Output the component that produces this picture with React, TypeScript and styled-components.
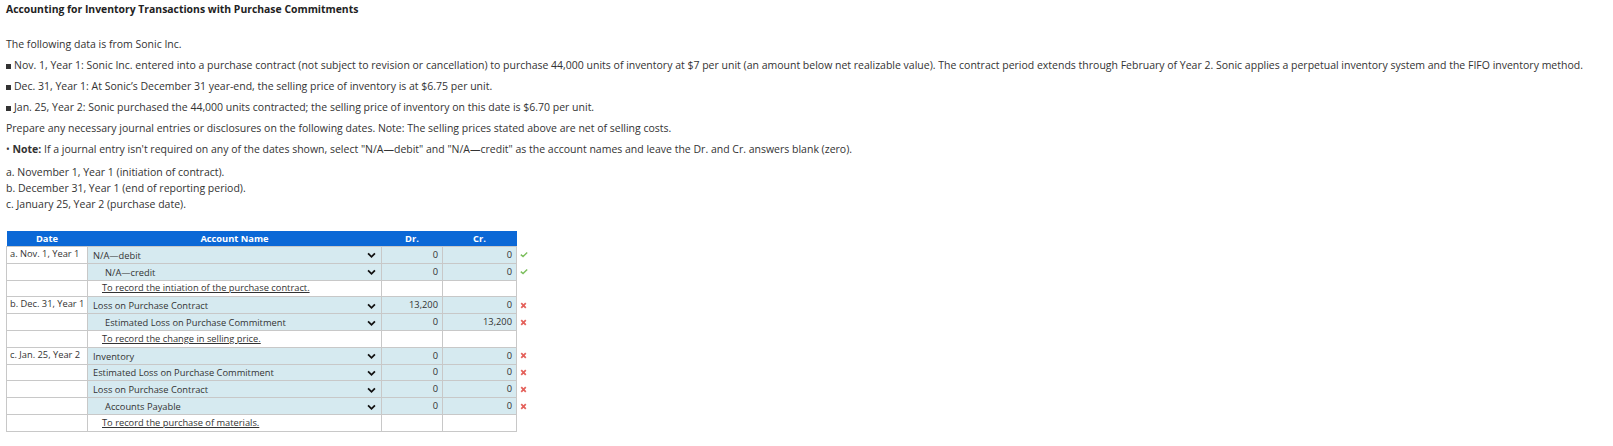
import styled, { createGlobalStyle } from 'styled-components'

const GlobalStyle = createGlobalStyle`
  body {
    margin: 0;
    background: #fff;
    font-family: "Open Sans", "Noto Sans", sans-serif;
    color: #333;
  }
`

type Status = 'ok' | 'bad' | undefined

interface Line {
  date?: string
  account: string
  indent?: boolean
  dr: string
  cr: string
  status: Status
}

interface Entry {
  lines: Line[]
  memo: string
}

const entries: Entry[] = [
  {
    lines: [
      { date: 'a. Nov. 1, Year 1', account: 'N/A\u2014debit', dr: '0', cr: '0', status: 'ok' },
      { account: 'N/A\u2014credit', indent: true, dr: '0', cr: '0', status: 'ok' },
    ],
    memo: 'To record the intiation of the purchase contract.',
  },
  {
    lines: [
      { date: 'b. Dec. 31, Year 1', account: 'Loss on Purchase Contract', dr: '13,200', cr: '0', status: 'bad' },
      { account: 'Estimated Loss on Purchase Commitment', indent: true, dr: '0', cr: '13,200', status: 'bad' },
    ],
    memo: 'To record the change in selling price.',
  },
  {
    lines: [
      { date: 'c. Jan. 25, Year 2', account: 'Inventory', dr: '0', cr: '0', status: 'bad' },
      { account: 'Estimated Loss on Purchase Commitment', dr: '0', cr: '0', status: 'bad' },
      { account: 'Loss on Purchase Contract', dr: '0', cr: '0', status: 'bad' },
      { account: 'Accounts Payable', indent: true, dr: '0', cr: '0', status: 'bad' },
    ],
    memo: 'To record the purchase of materials.',
  },
]

export default function App() {
  return (
    <Page>
      <GlobalStyle />
      <Title>Accounting for Inventory Transactions with Purchase Commitments</Title>
      <Para>The following data is from Sonic Inc.</Para>
      <Para>
        <Square />Nov. 1, Year 1: Sonic Inc. entered into a purchase contract (not subject to revision or
        cancellation) to purchase 44,000 units of inventory at $7 per unit (an amount below net realizable
        value). The contract period extends through February of Year 2. Sonic applies a perpetual inventory
        system and the FIFO inventory method.
      </Para>
      <Para>
        <Square />Dec. 31, Year 1: At Sonic’s December 31 year-end, the selling price of inventory is at $6.75 per unit.
      </Para>
      <Para>
        <Square />Jan. 25, Year 2: Sonic purchased the 44,000 units contracted; the selling price of inventory on
        this date is $6.70 per unit.
      </Para>
      <Para>
        Prepare any necessary journal entries or disclosures on the following dates. Note: The selling prices
        stated above are net of selling costs.
      </Para>
      <Para>
        <Dot>•</Dot> <b>Note:</b> If a journal entry isn't required on any of the dates shown, select
        "N/A—debit" and "N/A—credit" as the account names and leave the Dr. and Cr. answers blank (zero).
      </Para>
      <DateList>
        <div>a. November 1, Year 1 (initiation of contract).</div>
        <div>b. December 31, Year 1 (end of reporting period).</div>
        <div>c. January 25, Year 2 (purchase date).</div>
      </DateList>

      <Journal>
        <colgroup>
          <col style={{ width: 81 }} />
          <col style={{ width: 294 }} />
          <col style={{ width: 61 }} />
          <col style={{ width: 74 }} />
          <col style={{ width: 20 }} />
        </colgroup>
        <thead>
          <tr>
            <Th>Date</Th>
            <Th>Account Name</Th>
            <Th>Dr.</Th>
            <Th>Cr.</Th>
            <MarkCell />
          </tr>
        </thead>
        <tbody>
          {entries.map((entry, i) => (
            <EntryRows key={i} entry={entry} />
          ))}
        </tbody>
      </Journal>
    </Page>
  )
}

function EntryRows({ entry }: { entry: Entry }) {
  return (
    <>
      {entry.lines.map((line, j) => (
        <tr key={j}>
          <DateCell>{line.date}</DateCell>
          <Cell $filled>
            <AccountBox $indent={!!line.indent}>
              <span>{line.account}</span>
              <Chevron />
            </AccountBox>
          </Cell>
          <AmountCell $filled>{line.dr}</AmountCell>
          <AmountCell $filled>{line.cr}</AmountCell>
          <MarkCell>{line.status === 'ok' ? <Check /> : line.status === 'bad' ? <Cross /> : null}</MarkCell>
        </tr>
      ))}
      <tr>
        <DateCell />
        <Cell>
          <Memo>{entry.memo}</Memo>
        </Cell>
        <AmountCell />
        <AmountCell />
        <MarkCell />
      </tr>
    </>
  )
}

function Chevron() {
  return (
    <ChevronSvg viewBox="0 0 10 7" width="9" height="7">
      <path d="M1.2 1.2 L5 5 L8.8 1.2" fill="none" stroke="#111" strokeWidth="2" />
    </ChevronSvg>
  )
}

function Check() {
  return (
    <svg viewBox="0 0 10 8" width="8" height="7">
      <path d="M1 4.2 L3.8 6.6 L9 1.4" fill="none" stroke="#7dbf5e" strokeWidth="1.8" />
    </svg>
  )
}

function Cross() {
  return (
    <svg viewBox="0 0 8 8" width="7" height="7">
      <path d="M1.4 1.4 L6.6 6.6 M6.6 1.4 L1.4 6.6" fill="none" stroke="#e4615b" strokeWidth="2" />
    </svg>
  )
}

const Page = styled.div`
  padding: 1px 6px 20px;
`

const Title = styled.h1`
  margin: 1px 0 0;
  font-size: 10.4px;
  font-weight: 700;
  line-height: 14px;
  color: #222;
`

const Para = styled.p`
  margin: 0;
  font-size: 10.5px;
  line-height: 21px;
  color: #333;

  &:first-of-type {
    margin-top: 18px;
  }

  b {
    font-weight: 700;
  }
`

const Square = styled.span`
  display: inline-block;
  width: 5px;
  height: 5px;
  background: #333;
  margin-right: 3px;
  vertical-align: 0;
`

const Dot = styled.span`
  font-size: 10px;
`

const DateList = styled.div`
  margin-top: 4px;
  font-size: 10.5px;
  line-height: 16px;
  color: #333;
`

const Journal = styled.table`
  margin-top: 19px;
  border-collapse: collapse;
  table-layout: fixed;
  width: 530px;
  font-size: 9.3px;
  line-height: 12px;
  color: #333;
`

const Th = styled.th`
  background: #0b68d6;
  color: #fff;
  font-weight: 700;
  height: 15px;
  padding: 0;
  text-align: center;
  border: none;
`

const Cell = styled.td<{ $filled?: boolean }>`
  height: 15.8px;
  padding: 0;
  border: 1px solid #c8c8c8;
  background: ${(p) => (p.$filled ? '#d6eaf0' : '#fff')};
  vertical-align: middle;
`

const DateCell = styled.td`
  height: 15.8px;
  padding: 0 0 0 3px;
  border: 1px solid #c8c8c8;
  background: #fff;
  vertical-align: top;
  white-space: nowrap;
  line-height: 13px;
`

const AmountCell = styled(Cell)`
  text-align: right;
  padding-right: 4px;
`

const MarkCell = styled.td`
  border: none;
  padding: 0 0 0 3px;
  vertical-align: middle;
  line-height: 0;
`

const AccountBox = styled.div<{ $indent: boolean }>`
  display: flex;
  align-items: center;
  justify-content: space-between;
  padding: 2px 5px 0 ${(p) => (p.$indent ? 17 : 5)}px;
  white-space: nowrap;
`

const ChevronSvg = styled.svg`
  flex: none;
`

const Memo = styled.span`
  display: inline-block;
  padding-left: 14px;
  text-decoration: underline;
  color: #333;
`
